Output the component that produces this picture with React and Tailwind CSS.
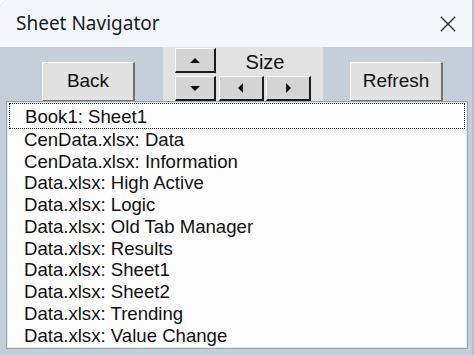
const sheets = [
  "Book1: Sheet1",
  "CenData.xlsx: Data",
  "CenData.xlsx: Information",
  "Data.xlsx: High Active",
  "Data.xlsx: Logic",
  "Data.xlsx: Old Tab Manager",
  "Data.xlsx: Results",
  "Data.xlsx: Sheet1",
  "Data.xlsx: Sheet2",
  "Data.xlsx: Trending",
  "Data.xlsx: Value Change",
];

const ArrowBtn = ({ dir, className }) => {
  const paths = {
    up: "M1 7 L6 2 L11 7 Z",
    down: "M1 2 L6 7 L11 2 Z",
    left: "M7 1 L2 6 L7 11 Z",
    right: "M3 1 L8 6 L3 11 Z",
  };
  const vertical = dir === "up" || dir === "down";
  return (
    <button
      className={`flex items-center justify-center bg-[#d4d4d4] border-t border-l border-t-white border-l-white border-b-2 border-r-2 border-b-[#1a1a1a] border-r-[#1a1a1a] ${className}`}
    >
      <svg
        width={vertical ? 12 : 10}
        height={vertical ? 9 : 12}
        viewBox={vertical ? "0 0 12 9" : "0 0 10 12"}
      >
        <path d={paths[dir]} fill="#111" />
      </svg>
    </button>
  );
};

const PushBtn = ({ children }) => (
  <button className="w-[93px] h-[40px] bg-[#e1e1e1] border-t border-l border-t-white border-l-white border-b-2 border-r-2 border-b-[#707070] border-r-[#707070] text-[19px] text-[#111] font-['Liberation_Sans',sans-serif]">
    {children}
  </button>
);

export default function App() {
  return (
    <div className="w-[474px] h-[355px] bg-[#c4cfda] rounded-tl-lg overflow-hidden flex flex-col font-['Liberation_Sans',sans-serif] border-r-2 border-r-[#b4bfca]">
      <div className="h-[47px] bg-[#f3f6fa] flex items-center justify-between pl-4 pr-[16px] shrink-0">
        <span className="text-[19px] text-[#1a1a1a] font-['Noto_Sans',sans-serif]">Sheet Navigator</span>
        <svg width="16" height="16" viewBox="0 0 16 16">
          <path d="M1 1 L15 15 M15 1 L1 15" stroke="#222" strokeWidth="1.3" />
        </svg>
      </div>

      <div className="h-[55px] flex shrink-0">
        <div className="w-[163px] flex items-end justify-start pl-[42px]">
          <PushBtn>Back</PushBtn>
        </div>
        <div className="w-[160px] bg-[#e2e2e2] flex pl-3 pt-[1px] gap-[3px]">
          <div className="flex flex-col gap-[3px] w-[41px]">
            <ArrowBtn dir="up" className="h-[25px] w-[41px]" />
            <ArrowBtn dir="down" className="h-[25px] w-[41px]" />
          </div>
          <div className="flex flex-col w-[92px]">
            <div className="h-[28px] flex items-center justify-center text-[20px] text-[#111]">Size</div>
            <div className="flex gap-[2px]">
              <ArrowBtn dir="left" className="h-[25px] w-[45px]" />
              <ArrowBtn dir="right" className="h-[25px] w-[45px]" />
            </div>
          </div>
        </div>
        <div className="flex-1 flex items-end pl-[27px]">
          <PushBtn>Refresh</PushBtn>
        </div>
      </div>

      <div className="h-[246px] bg-[#fdfdfd] border border-[#e9ecef] outline outline-1 outline-[#9aa4ae] ml-[7px] mr-[5px]">
        <ul className="text-[18.6px] text-[#111] leading-[21.75px]">
          {sheets.map((s, i) => (
            <li
              key={s}
              className={
                i === 0
                  ? "border border-dotted border-[#222] mx-[1px] pl-[15px] pt-[2px] h-[25.75px]"
                  : "pl-[16px] h-[21.75px]"
              }
            >
              {s}
            </li>
          ))}
        </ul>
      </div>
    </div>
  );
}
